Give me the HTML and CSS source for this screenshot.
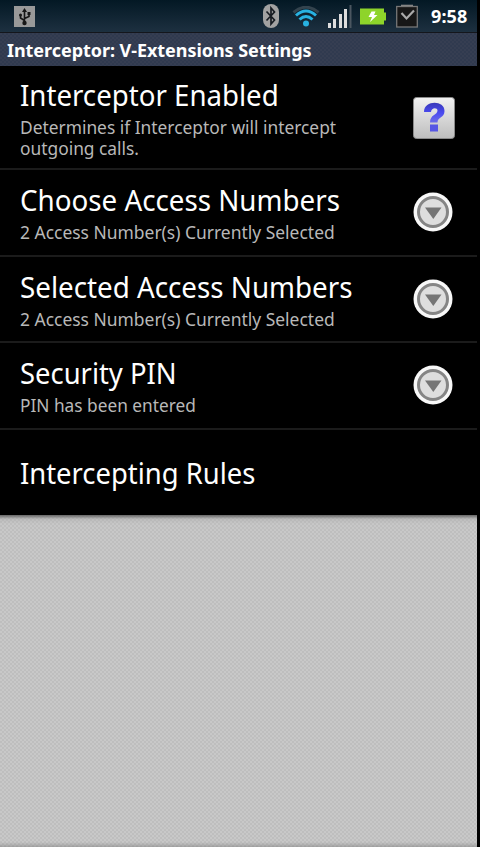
FILE: index.html
```html
<!DOCTYPE html>
<html lang="en">
<head>
<meta charset="utf-8">
<title>Interceptor: V-Extensions Settings</title>
<link rel="stylesheet" href="styles.css">
</head>
<body>
<div class="device">
  <div class="screen">
    <header class="status">
      <svg class="usb" width="21" height="21" viewBox="0 0 21 21"><rect width="21" height="21" fill="#999"/><g fill="none" stroke="#171717" stroke-width="1.6"><path d="M10.5 5v12M10.5 14.500L6.500 12V9M10.500 12.500L15 10.500V7.500"/></g><path d="M10.500 2l2.500 4h-5z" fill="#171717"/><circle cx="10.500" cy="17" r="2.200" fill="#171717"/><circle cx="6.500" cy="9" r="1.500" fill="#171717"/><path d="M13.500 6h3v3h-3z" fill="#171717"/></svg>
      <div class="tray">
        <svg width="16" height="24" viewBox="0 0 16 24"><rect width="16" height="24" rx="8" fill="#a2a2a2"/><path d="M3.500 7.500l8 8.500L8 20V4l3.500 4-8 8.500" fill="none" stroke="#171c22" stroke-width="1.700"/></svg>
        <svg class="wifi" width="28" height="21" viewBox="0 0 28 21"><g fill="none" stroke-width="3"><path d="M1.500 6.500Q14-4 26.500 6.500" stroke="#34444e"/><path d="M4 9.500Q14 .5 24 9.500M7.500 13.500Q14 7.500 20.500 13.500" stroke="#28b2e2"/></g><circle cx="14" cy="17.500" r="3" fill="#28b2e2"/></svg>
        <svg class="signal" width="24" height="23" viewBox="0 0 24 23"><path d="M0 18h3v5H0zM5 14h3v9H5zM11 9h3v14h-3zM16 4h3v19h-3z" fill="#ddd"/><path d="M21.500 0h2v23h-2z" fill="#4b5660"/></svg>
        <svg class="battery" width="26" height="17" viewBox="0 0 26 17"><path d="M0 .5h24v4h2v8h-2v4H0z" fill="#8ed42a"/><path d="M11.500 3.500h4l-1.500 3.500h3.500L10 14l2-5H8.500z" fill="#fff"/></svg>
        <svg class="check" width="22" height="24" viewBox="0 0 22 24"><path d="M5 .7h12v2H5z" fill="#888"/><rect x=".7" y="2.500" width="20.600" height="20.500" fill="#171717" stroke="#777" stroke-width="1.300"/><path d="M5.500 9l5 5.500 7.500-8" fill="none" stroke="#aaa" stroke-width="2.200"/></svg>
        <span class="clock">9:58</span>
      </div>
    </header>
    <h1 class="titlebar"><span>Interceptor: V-Extensions Settings</span></h1>
    <main>
      <section class="row row-tall">
        <div class="copy"><h2>Interceptor Enabled</h2><p>Determines if Interceptor will intercept<br>outgoing calls.</p></div>
        <svg class="help" width="42" height="42" viewBox="0 0 42 42"><defs><linearGradient id="plate" x2="0" y2="1"><stop stop-color="#f2f2f2"/><stop offset="1" stop-color="#bdbdbd"/></linearGradient><linearGradient id="mark" x2="0" y2="1"><stop stop-color="#3838b8"/><stop offset=".5" stop-color="#4a4af0"/><stop offset="1" stop-color="#6c6ce8"/></linearGradient></defs><rect x=".5" y=".5" width="41" height="41" rx="3" fill="url(#plate)" stroke="#8a8a8a"/><path d="M11 15C11 3 31.500 3 31.500 14C31.500 21 24.500 20 24.500 25.500H17C17 17.500 24.500 18 24.500 13.500C24.500 10.500 18.500 10 18 15Z" fill="url(#mark)"/><path d="M17 27.500h8V34.500h-8z" fill="#5757e4"/></svg>
      </section>
      <section class="row">
        <div class="copy"><h2 class="t-choose">Choose Access Numbers</h2><p class="s-num">2 Access Number(s) Currently Selected</p></div>
        <svg class="drop" width="40" height="40" viewBox="0 0 40 40"><circle cx="20" cy="20" r="19.500" fill="#f8f8f8"/><circle cx="20" cy="20" r="14.500" fill="#dedede" stroke="#858585" stroke-width="3"/><path d="M12 15.500h16.500L20.300 27z" fill="#757575"/></svg>
      </section>
      <section class="row">
        <div class="copy"><h2 class="t-selected">Selected Access Numbers</h2><p class="s-num">2 Access Number(s) Currently Selected</p></div>
        <svg class="drop" width="40" height="40" viewBox="0 0 40 40"><circle cx="20" cy="20" r="19.500" fill="#f8f8f8"/><circle cx="20" cy="20" r="14.500" fill="#dedede" stroke="#858585" stroke-width="3"/><path d="M12 15.500h16.500L20.300 27z" fill="#757575"/></svg>
      </section>
      <section class="row">
        <div class="copy"><h2 class="t-pin">Security PIN</h2><p class="s-pin">PIN has been entered</p></div>
        <svg class="drop" width="40" height="40" viewBox="0 0 40 40"><circle cx="20" cy="20" r="19.500" fill="#f8f8f8"/><circle cx="20" cy="20" r="14.500" fill="#dedede" stroke="#858585" stroke-width="3"/><path d="M12 15.500h16.500L20.300 27z" fill="#757575"/></svg>
      </section>
      <section class="row row-last"><div class="copy"><h2 class="t-rules">Intercepting Rules</h2></div></section>
    </main>
    <div class="empty"></div>
  </div>
</div>
</body>
</html>
```
FILE: styles.css
```css
* { box-sizing: border-box; }
body { margin: 0; background: #fff; font-family: "Noto Sans", sans-serif; color: #fff; }
h1, h2, p { margin: 0; white-space: nowrap; }
svg { display: block; flex: none; }
.device { width: 480px; height: 847px; background: #000; }
.screen { width: 477px; height: 847px; display: flex; flex-direction: column; }
.status { height: 33px; flex: none; display: flex; align-items: center; justify-content: space-between; padding: 0 9px 0 14px; background: linear-gradient(#031824, #1d3040); border-bottom: 1px solid #14161c; }
.tray { display: flex; align-items: center; }
.wifi { margin-left: 13px; }
.signal { margin-left: 8px; }
.battery { margin-left: 8px; }
.check { margin-left: 10px; }
.clock { width: 37px; margin-left: 13px; font-size: 18px; line-height: 32px; font-weight: 700; letter-spacing: 0.1px; }
.titlebar { height: 33px; flex: none; padding-left: 7px; line-height: 34px; font-size: 18px; font-weight: 700; letter-spacing: -0.05px; background: repeating-conic-gradient(#303a4f 0 25%, #363e52 0 50%) 0 0 / 4px 4px; }
main { flex: none; background: #000; }
.row { height: 86.500px; display: flex; align-items: center; justify-content: space-between; padding: 0 24.500px 0 20px; border-bottom: 2px solid #1b1b1b; }
.row-tall { height: 104px; padding-right: 22px; }
.row-last { height: 85px; border-bottom: 0; }
.row-tall .copy, .row-last .copy { padding-top: 1px; }
.help { margin-top: 2px; }
h2 { font-size: 29px; line-height: 36px; font-weight: 400; transform: scaleX(0.953); transform-origin: left; }
p { font-size: 18.500px; line-height: 21px; color: #b8b8b8; margin-top: 3px; transform: scaleX(0.938); transform-origin: left; }
.t-choose, .t-selected { transform: scaleX(0.957); }
.t-pin, .t-rules { transform: scaleX(0.945); }
.s-num { transform: scaleX(0.943); }
.s-pin { transform: scaleX(0.934); }
.empty { flex: 1; background: linear-gradient(#666, #aaa6 4px, #0000 9px, #0000 calc(100% - 5px), #7777), repeating-conic-gradient(#bebebe 0 25%, #c8c8c8 0 50%) 0 0 / 4px 4px; }
```
